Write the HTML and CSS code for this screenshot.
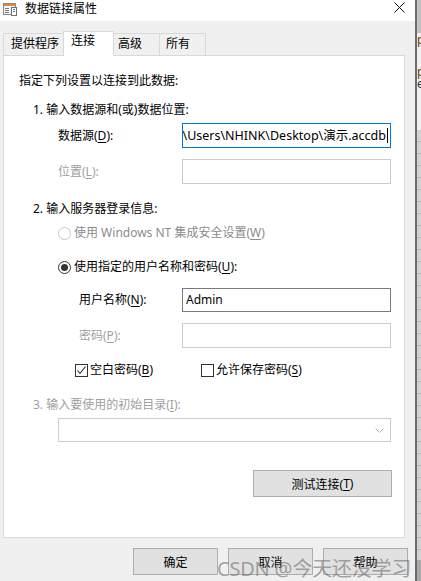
FILE: index.html
```html
<!DOCTYPE html>
<html lang="zh-CN">
<head>
<meta charset="utf-8">
<title>数据链接属性</title>
<link rel="stylesheet" href="styles.css">
</head>
<body>
<div class="screen">
  <div class="window">
    <div class="titlebar">
      <svg class="app-icon" width="16" height="13" viewBox="0 0 16 13">
        <rect x="0.5" y="0.5" width="12" height="11" fill="#f4f4f4" stroke="#8a8a8a"/>
        <rect x="1" y="1" width="11" height="2" fill="#e08a3c"/>
        <rect x="2" y="5" width="4" height="1" fill="#7a7a7a"/>
        <rect x="2" y="7" width="4" height="1" fill="#7a7a7a"/>
        <rect x="2" y="9" width="4" height="1" fill="#7a7a7a"/>
        <rect x="8.5" y="4.5" width="5" height="8" fill="#ffffff" stroke="#6f6f6f"/>
        <rect x="10" y="6" width="2" height="1" fill="#3a74c4"/>
        <rect x="10" y="8" width="2" height="1" fill="#3a74c4"/>
      </svg>
      <span class="title">数据链接属性</span>
      <svg class="close" width="11" height="11" viewBox="0 0 11 11">
        <path d="M0.5 0.5 L10.5 10.5 M10.5 0.5 L0.5 10.5" stroke="#111" stroke-width="1" fill="none"/>
      </svg>
    </div>

    <div class="body">
      <div class="tabs">
        <div class="tab tab-provider">提供程序</div>
        <div class="tab tab-active">连接</div>
        <div class="tab tab-advanced">高级</div>
        <div class="tab tab-all">所有</div>
      </div>

      <div class="panel">
        <div class="intro">指定下列设置以连接到此数据:</div>

        <div class="heading h-first">1. 输入数据源和(或)数据位置:</div>
        <div class="field-row row-source">
          <label class="label label-wide">数据源(<u>D</u>):</label>
          <div class="input input-focus">
            <span class="input-text">C:\Users\NHINK\Desktop\演示.accdb</span><span class="caret"></span>
          </div>
        </div>
        <div class="field-row row-location">
          <label class="label label-wide disabled">位置(<u>L</u>):</label>
          <div class="input input-disabled"></div>
        </div>

        <div class="heading h-second">2. 输入服务器登录信息:</div>
        <div class="option radio-nt disabled">
          <span class="radio radio-off"></span>
          <span>使用 Windows NT 集成安全设置(<u>W</u>)</span>
        </div>
        <div class="option radio-user">
          <span class="radio radio-on"></span>
          <span>使用指定的用户名称和密码(<u>U</u>):</span>
        </div>
        <div class="field-row row-user">
          <label class="label label-narrow">用户名称(<u>N</u>):</label>
          <div class="input input-normal"><span class="input-text">Admin</span></div>
        </div>
        <div class="field-row row-password">
          <label class="label label-narrow disabled">密码(<u>P</u>):</label>
          <div class="input input-disabled"></div>
        </div>
        <div class="checks">
          <div class="option check-blank">
            <span class="checkbox">
              <svg width="11" height="11" viewBox="0 0 11 11"><path d="M1.5 5.5 L4 8.5 L9.5 1.5" stroke="#222" stroke-width="1.1" fill="none"/></svg>
            </span>
            <span>空白密码(<u>B</u>)</span>
          </div>
          <div class="option check-save">
            <span class="checkbox"></span>
            <span>允许保存密码(<u>S</u>)</span>
          </div>
        </div>

        <div class="heading h-third disabled">3. 输入要使用的初始目录(<u>I</u>):</div>
        <div class="combo">
          <svg class="chevron" width="9" height="5" viewBox="0 0 9 5"><path d="M0.5 0.5 L4.5 4.5 L8.5 0.5" stroke="#b8b8b8" fill="none"/></svg>
        </div>

        <div class="button test-button">测试连接(<u>T</u>)</div>
      </div>

      <div class="footer">
        <div class="button dlg-button">确定</div>
        <div class="button dlg-button">取消</div>
        <div class="button dlg-button">帮助</div>
      </div>

      <div class="watermark">CSDN @今天还没学习</div>
    </div>
  </div>

  <div class="desktop">
    <span class="peek peek-1">p</span>
    <span class="peek peek-2">p</span>
    <span class="peek peek-3">e</span>
  </div>
</div>
</body>
</html>
```

FILE: styles.css
```css
* {
  box-sizing: border-box;
}

html, body {
  margin: 0;
  padding: 0;
}

body {
  width: 421px;
  height: 581px;
  overflow: hidden;
  font-family: "Noto Sans", "Noto Sans CJK SC", sans-serif;
  font-size: 12px;
  color: #000;
  background: #d4d4d4;
}

.screen {
  display: flex;
  width: 421px;
  height: 581px;
}

/* ---------- dialog window ---------- */
.window {
  position: relative;
  width: 417px;
  height: 581px;
  background: #f0f0f0;
  border-right: 2px solid #6c6c6c;
  flex: none;
}

.titlebar {
  display: flex;
  align-items: center;
  height: 21px;
  background: #ffffff;
  padding-left: 3px;
}

.app-icon {
  flex: none;
  margin-top: -2px;
}

.title {
  margin-left: 6px;
  line-height: 16px;
  margin-top: -4px;
}

.close {
  margin-left: auto;
  margin-right: 10px;
  margin-top: -6px;
}

.body {
  position: relative;
}

/* ---------- tabs ---------- */
.tabs {
  display: flex;
  align-items: flex-end;
  height: 24px;
  margin-top: 10px;
  padding-left: 3px;
}

.tab {
  height: 22px;
  line-height: 20px;
  background: #f0f0f0;
  border: 1px solid #d9d9d9;
  border-bottom: none;
  white-space: nowrap;
}

.tab-provider {
  width: 60px;
  padding-left: 7px;
  border-right: none;
}

.tab-active {
  position: relative;
  z-index: 2;
  width: 51px;
  height: 25px;
  margin-bottom: -1px;
  padding-left: 7px;
  line-height: 18px;
  background: #ffffff;
}

.tab-advanced {
  width: 46px;
  padding-left: 4px;
  border-left: none;
}

.tab-all {
  width: 46px;
  padding-left: 6px;
  border-left: none;
}

/* ---------- tab page ---------- */
.panel {
  position: relative;
  z-index: 1;
  width: 402px;
  height: 483px;
  margin-left: 3px;
  background: #ffffff;
  border: 1px solid #d9d9d9;
  display: flex;
  flex-direction: column;
  align-items: flex-start;
}

.intro,
.heading,
.option {
  line-height: 16px;
  white-space: nowrap;
}

.intro {
  margin-top: 17px;
  margin-left: 15px;
}

.heading {
  margin-left: 29px;
}

.h-first { margin-top: 13px; }
.h-second { margin-top: 17px; }
.h-third { margin-top: 19px; }

.disabled {
  color: #a0a0a0;
}

u {
  text-decoration: underline;
  text-underline-offset: 2px;
}

.field-row {
  display: flex;
  align-items: center;
}

.row-source { margin-top: 5px; }
.row-location { margin-top: 11px; }
.row-user { margin-top: 13px; }
.row-password { margin-top: 11px; }

.label {
  line-height: 16px;
  white-space: nowrap;
}

.label-wide {
  margin-left: 54px;
  width: 124px;
}

.label-narrow {
  margin-left: 75px;
  width: 103px;
}

.input {
  display: flex;
  align-items: center;
  width: 209px;
  height: 25px;
  background: #ffffff;
  overflow: hidden;
  white-space: nowrap;
  font-size: 12px;
}

.input-focus {
  border: 1px solid #0078d7;
  justify-content: flex-end;
  padding-right: 2px;
  font-size: 12.5px;
}

.input-normal {
  height: 24px;
  border: 1px solid #7a7a7a;
  padding-left: 3px;
}

.input-disabled {
  border: 1px solid #cccccc;
}

.input-text {
  flex: none;
  line-height: 16px;
}

.caret {
  flex: none;
  width: 1px;
  height: 15px;
  background: #000;
  margin-left: 1px;
}

/* ---------- radio buttons / checkboxes ---------- */
.option {
  display: flex;
  align-items: center;
}

.radio-nt {
  margin-top: 8px;
  margin-left: 54px;
  color: #8c8c8c;
}

.radio-user {
  margin-top: 18px;
  margin-left: 54px;
}

.radio {
  position: relative;
  flex: none;
  width: 13px;
  height: 13px;
  border-radius: 50%;
  margin-right: 3px;
  background: #ffffff;
}

.radio-off {
  border: 1px solid #c8c8c8;
}

.radio-on {
  border: 1px solid #333333;
}

.radio-on::after {
  content: "";
  position: absolute;
  left: 2px;
  top: 2px;
  width: 7px;
  height: 7px;
  border-radius: 50%;
  background: #333333;
}

.checks {
  display: flex;
  margin-top: 14px;
}

.check-blank {
  width: 126px;
  margin-left: 71px;
}

.checkbox {
  display: flex;
  align-items: center;
  justify-content: center;
  flex: none;
  width: 13px;
  height: 13px;
  border: 1px solid #333333;
  background: #ffffff;
  margin-right: 2px;
}

.combo {
  position: relative;
  margin-top: 5px;
  margin-left: 54px;
  width: 333px;
  height: 24px;
  border: 1px solid #cccccc;
  background: #ffffff;
}

.chevron {
  position: absolute;
  right: 6px;
  top: 9px;
}

/* ---------- push buttons ---------- */
.button {
  display: flex;
  align-items: center;
  justify-content: center;
  background: #e1e1e1;
  border: 1px solid #adadad;
  white-space: nowrap;
}

.test-button {
  margin-top: 28px;
  margin-left: 249px;
  width: 139px;
  height: 27px;
}

.footer {
  display: flex;
  justify-content: flex-end;
  gap: 10px;
  margin-top: 10px;
  padding-right: 7px;
}

.dlg-button {
  width: 85px;
  height: 27px;
}

.watermark {
  position: absolute;
  left: 217px;
  top: 525px;
  font-family: "Noto Sans", "Noto Sans CJK SC", sans-serif;
  font-size: 20px;
  line-height: 26px;
  color: rgba(110, 110, 110, 0.6);
  white-space: nowrap;
  letter-spacing: -0.2px;
  z-index: 5;
}

/* ---------- desktop behind the dialog ---------- */
.desktop {
  position: relative;
  flex: 1;
  height: 581px;
  background:
    repeating-linear-gradient(to bottom, transparent 0, transparent 11px, #b9b9b9 11px, #b9b9b9 12px) 0 130px / 100% 430px no-repeat,
    linear-gradient(to bottom, #c4c4c4 0, #c4c4c4 33px, #f0f0f0 33px, #f0f0f0 130px, #d2d2d2 130px, #d2d2d2 560px, #a9a9a9 560px);
  overflow: hidden;
}

.peek {
  position: absolute;
  left: 0;
  font-size: 12px;
  line-height: 14px;
  color: #333;
}

.peek-1 { top: 33px; color: #6b3a12; }
.peek-2 { top: 65px; color: #6b3a12; }
.peek-3 { top: 77px; }
```
